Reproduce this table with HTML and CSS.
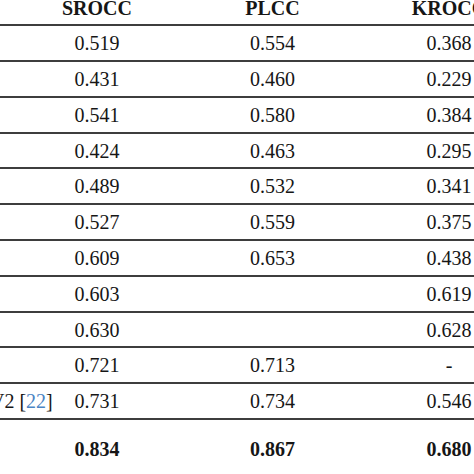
FILE: index.html
```html
<!DOCTYPE html>
<html lang="en">
<head>
<meta charset="utf-8">
<title>Results table</title>
<link rel="stylesheet" href="styles.css">
</head>
<body>
<div class="frame">
  <div class="table">
    <div class="row head"><div class="cell label"></div><div class="cell">SROCC</div><div class="cell">PLCC</div><div class="cell">KROCC</div></div>
    <div class="row"><div class="cell label"></div><div class="cell">0.519</div><div class="cell">0.554</div><div class="cell">0.368</div></div>
    <div class="row"><div class="cell label"></div><div class="cell">0.431</div><div class="cell">0.460</div><div class="cell">0.229</div></div>
    <div class="row"><div class="cell label"></div><div class="cell">0.541</div><div class="cell">0.580</div><div class="cell">0.384</div></div>
    <div class="row"><div class="cell label"></div><div class="cell">0.424</div><div class="cell">0.463</div><div class="cell">0.295</div></div>
    <div class="row"><div class="cell label"></div><div class="cell">0.489</div><div class="cell">0.532</div><div class="cell">0.341</div></div>
    <div class="row"><div class="cell label"></div><div class="cell">0.527</div><div class="cell">0.559</div><div class="cell">0.375</div></div>
    <div class="row"><div class="cell label"></div><div class="cell">0.609</div><div class="cell">0.653</div><div class="cell">0.438</div></div>
    <div class="row"><div class="cell label"></div><div class="cell">0.603</div><div class="cell"></div><div class="cell">0.619</div></div>
    <div class="row"><div class="cell label"></div><div class="cell">0.630</div><div class="cell"></div><div class="cell">0.628</div></div>
    <div class="row"><div class="cell label"></div><div class="cell">0.721</div><div class="cell">0.713</div><div class="cell">-</div></div>
    <div class="row"><div class="cell label">V2 [<span class="ref">22</span>]</div><div class="cell">0.731</div><div class="cell">0.734</div><div class="cell">0.546</div></div>
    <div class="row best"><div class="cell label"></div><div class="cell">0.834</div><div class="cell">0.867</div><div class="cell">0.680</div></div>
  </div>
</div>
</body>
</html>
```

FILE: styles.css
```css
html, body {
  margin: 0;
  padding: 0;
  background: #ffffff;
}

.frame {
  width: 474px;
  height: 474px;
  overflow: hidden;
}

.table {
  margin: -9.5px 0 0 -10px;
  width: 503px;
  font-family: "Liberation Serif", "Times New Roman", serif;
  font-size: 20px;
  color: #161616;
}

.row {
  display: grid;
  grid-template-columns: 64px 86px 265px 88px;
  height: 33.8px;
  border-bottom: 2px solid #3d3d3d;
}

.cell {
  padding-top: 2px;
  line-height: 31.8px;
  text-align: center;
  white-space: nowrap;
}

.label {
  text-align: left;
}

.head {
  font-weight: bold;
}

.best {
  font-weight: bold;
  border-bottom: none;
  padding-top: 12px;
}

.ref {
  color: #4a84c4;
}
```
